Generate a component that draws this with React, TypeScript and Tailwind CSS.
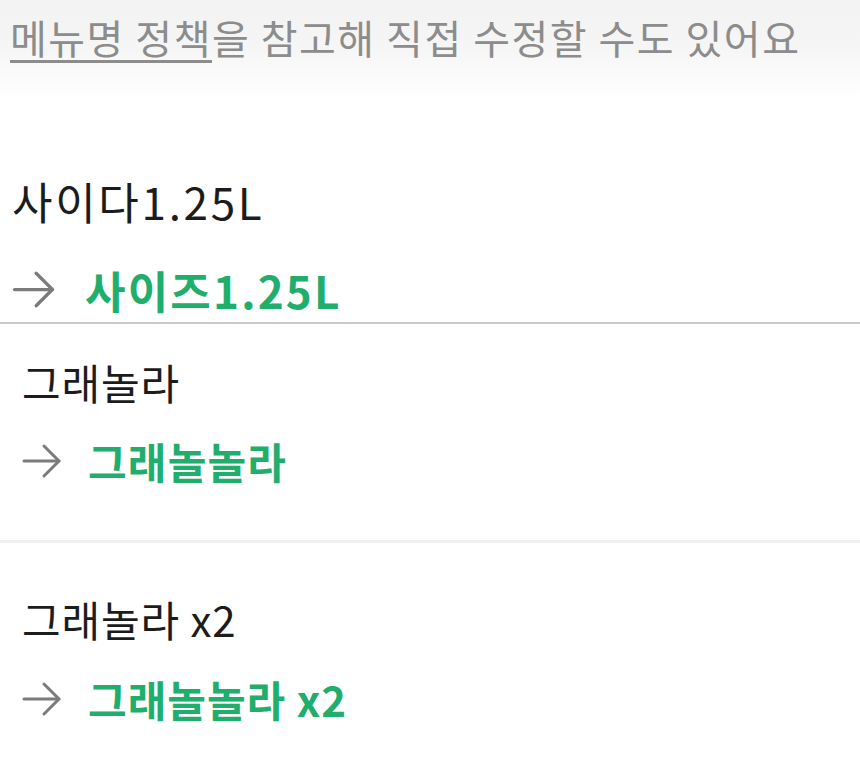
import React from "react";

const Arrow = ({ className = "" }: { className?: string }) => (
  <svg viewBox="0 0 40 36" className={className} fill="none" stroke="#7b7b7b" strokeWidth="3" strokeLinecap="round" strokeLinejoin="round">
    <path d="M2 18 H37" />
    <path d="M22 3 L37 18 L22 33" />
  </svg>
);

export default function App() {
  return (
    <div
      className="w-[860px] h-[760px] bg-white overflow-hidden"
      style={{ fontFamily: '"Noto Sans CJK KR", "Noto Sans", sans-serif' }}
    >
      <div className="h-[100px] bg-gradient-to-b from-[#f2f2f2] via-[#f6f6f6] to-white">
        <p className="pl-[10px] leading-[74px] text-[40px] text-[#8c8c8c] tracking-[1.5px] whitespace-nowrap">
          <span className="underline decoration-[3px] underline-offset-[6px] decoration-[#8c8c8c]">메뉴명 정책</span>
          을 참고해 직접 수정할 수도 있어요
        </p>
      </div>

      <div className="pl-[12px] pt-[71px] pb-[2px] border-b-2 border-[#cbcbcb]">
        <div className="h-[60px] leading-[60px] text-[44px] text-[#1c1c1c] tracking-[2.7px]">사이다1.25L</div>
        <div className="mt-[28px] h-[61px] flex items-center">
          <Arrow className="w-[44px] h-[39px]" />
          <span className="ml-[29px] leading-[60px] text-[44px] font-bold text-[#1fae6b] tracking-[2.2px]">사이즈1.25L</span>
        </div>
      </div>

      <div className="pl-[22px] pt-[28px] pb-[49px] border-b-[3px] border-[#f0f0f0]">
        <div className="h-[60px] leading-[60px] text-[42px] text-[#1c1c1c] tracking-[0.9px]">그래놀라</div>
        <div className="mt-[19px] h-[60px] flex items-center">
          <Arrow className="w-[40px] h-[36px]" />
          <span className="ml-[26px] leading-[60px] text-[42px] font-bold text-[#1fae6b] tracking-[1.2px]">그래놀놀라</span>
        </div>
      </div>

      <div className="pl-[22px] pt-[46px]">
        <div className="h-[60px] leading-[60px] text-[42px] text-[#1c1c1c] tracking-[0.9px]">그래놀라 x2</div>
        <div className="mt-[20px] h-[60px] flex items-center">
          <Arrow className="w-[40px] h-[36px]" />
          <span className="ml-[26px] leading-[60px] text-[42px] font-bold text-[#1fae6b] tracking-[1px]">그래놀놀라 x2</span>
        </div>
      </div>
    </div>
  );
}
